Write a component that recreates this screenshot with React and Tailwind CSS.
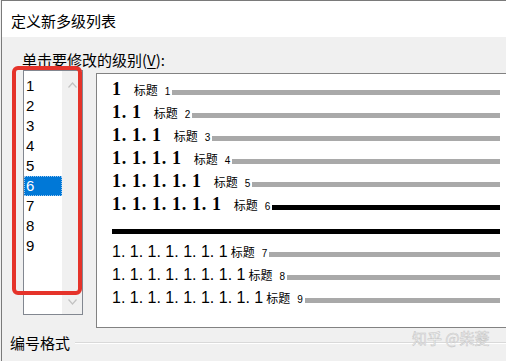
import React from 'react';

const cjk = { fontFamily: '"Noto Sans CJK SC", "Noto Sans", sans-serif' };

const upper = [1, 2, 3, 4, 5, 6];
const lower = [7, 8, 9];

function numText(n) {
  return Array.from({ length: n }, () => '1').join('. ');
}

function Label({ n }) {
  return (
    <>
      <span className="text-[12px] leading-[12px] ml-[12px] font-['Noto_Sans_CJK_SC',sans-serif]">标题</span>
      <span className="text-[10px] leading-[10px] ml-[7px] font-['Liberation_Sans',sans-serif]">{n}</span>
    </>
  );
}

export default function App() {
  return (
    <div className="w-[506px] h-[361px] bg-[#f0f0f0] pl-px overflow-hidden">
      <div className="relative h-full border-t border-l border-[#7a7a7a] bg-[#f0f0f0] text-black" style={cjk}>
        <div className="h-[36px] bg-white pl-[9px] pt-[10px]">
          <div className="text-[15px] leading-[20px]">定义新多级列表</div>
        </div>

        <div className="mt-[13px] pl-[20px] text-[15px] leading-[20px]">
          单击要修改的级别(<span className="underline underline-offset-2">V</span>):
        </div>

        <div className="relative flex">
          <div className="ml-[21px] w-[60px] h-[245px] shrink-0 border border-[#828790] bg-white flex">
            <div className="flex-1 pt-[5px] font-['Liberation_Sans',sans-serif] text-[15px]">
              {[1, 2, 3, 4, 5, 6, 7, 8, 9].map((n) => (
                <div
                  key={n}
                  className={
                    n === 6
                      ? 'h-[20px] leading-[18px] pl-[1px] bg-[#0078d7] text-white border border-dotted border-[#9cc8f0]'
                      : 'h-[20px] leading-[20px] pl-[2px]'
                  }
                >
                  {n}
                </div>
              ))}
            </div>
            <div className="w-[20px] bg-[#f0f0f0] flex flex-col items-center justify-between pt-[11px] pb-[9px]">
              <svg width="9" height="6" viewBox="0 0 9 6" fill="none" stroke="#c2c2c2" strokeWidth="1.2">
                <polyline points="0.5,5.5 4.5,1 8.5,5.5" />
              </svg>
              <svg width="9" height="6" viewBox="0 0 9 6" fill="none" stroke="#c2c2c2" strokeWidth="1.2">
                <polyline points="0.5,0.5 4.5,5 8.5,0.5" />
              </svg>
            </div>
          </div>

          <div className="absolute left-[10px] top-[-4px] w-[70px] h-[229px] border-[4px] border-[#e5332a] rounded-[6px]" />

          <div className="ml-[13px] mt-[3px] w-[440px] h-[255px] shrink-0 border border-[#828282] bg-white pl-[15px] pt-[4px]">
            <div className="w-[388px]">
              {upper.map((n) => (
                <div key={n} className="flex items-baseline h-[23px]">
                  <span className="font-['Liberation_Serif',serif] font-bold text-[18px] leading-[23px] tracking-[0.67px] whitespace-pre">
                    {numText(n)}
                  </span>
                  <Label n={n} />
                  <div className={n === 6 ? 'flex-1 ml-[2px] h-[5px] bg-black' : 'flex-1 ml-[2px] h-[5px] bg-[#a9a9a9]'} />
                </div>
              ))}
              <div className="mt-[13px] h-[5px] bg-black" />
              <div className="mt-[6px]">
                {lower.map((n) => (
                  <div key={n} className="flex items-baseline h-[23px]">
                    <span className="font-['Liberation_Sans',sans-serif] text-[16px] leading-[23px] whitespace-pre">
                      {numText(n)}
                    </span>
                    <span className="text-[12px] leading-[12px] ml-[3px] font-['Noto_Sans_CJK_SC',sans-serif]">标题</span>
                    <span className="text-[10px] leading-[10px] ml-[7px] font-['Liberation_Sans',sans-serif]">{n}</span>
                    <div className="flex-1 ml-[2px] h-[5px] bg-[#a9a9a9]" />
                  </div>
                ))}
              </div>
            </div>
          </div>
        </div>

        <div className="mt-[5px] flex items-center pl-[8px]">
          <span className="text-[15px] leading-[20px]">编号格式</span>
          <div className="flex-1 ml-[5px] border-t border-[#d9d9d9] border-b border-b-white" />
        </div>

        <div className="absolute left-[410px] top-[327px] text-[15px] leading-[20px] text-[#f7f7f7] [-webkit-text-stroke:0.5px_#c4c4c4]">
          知乎 @柴菱
        </div>
      </div>
    </div>
  );
}
